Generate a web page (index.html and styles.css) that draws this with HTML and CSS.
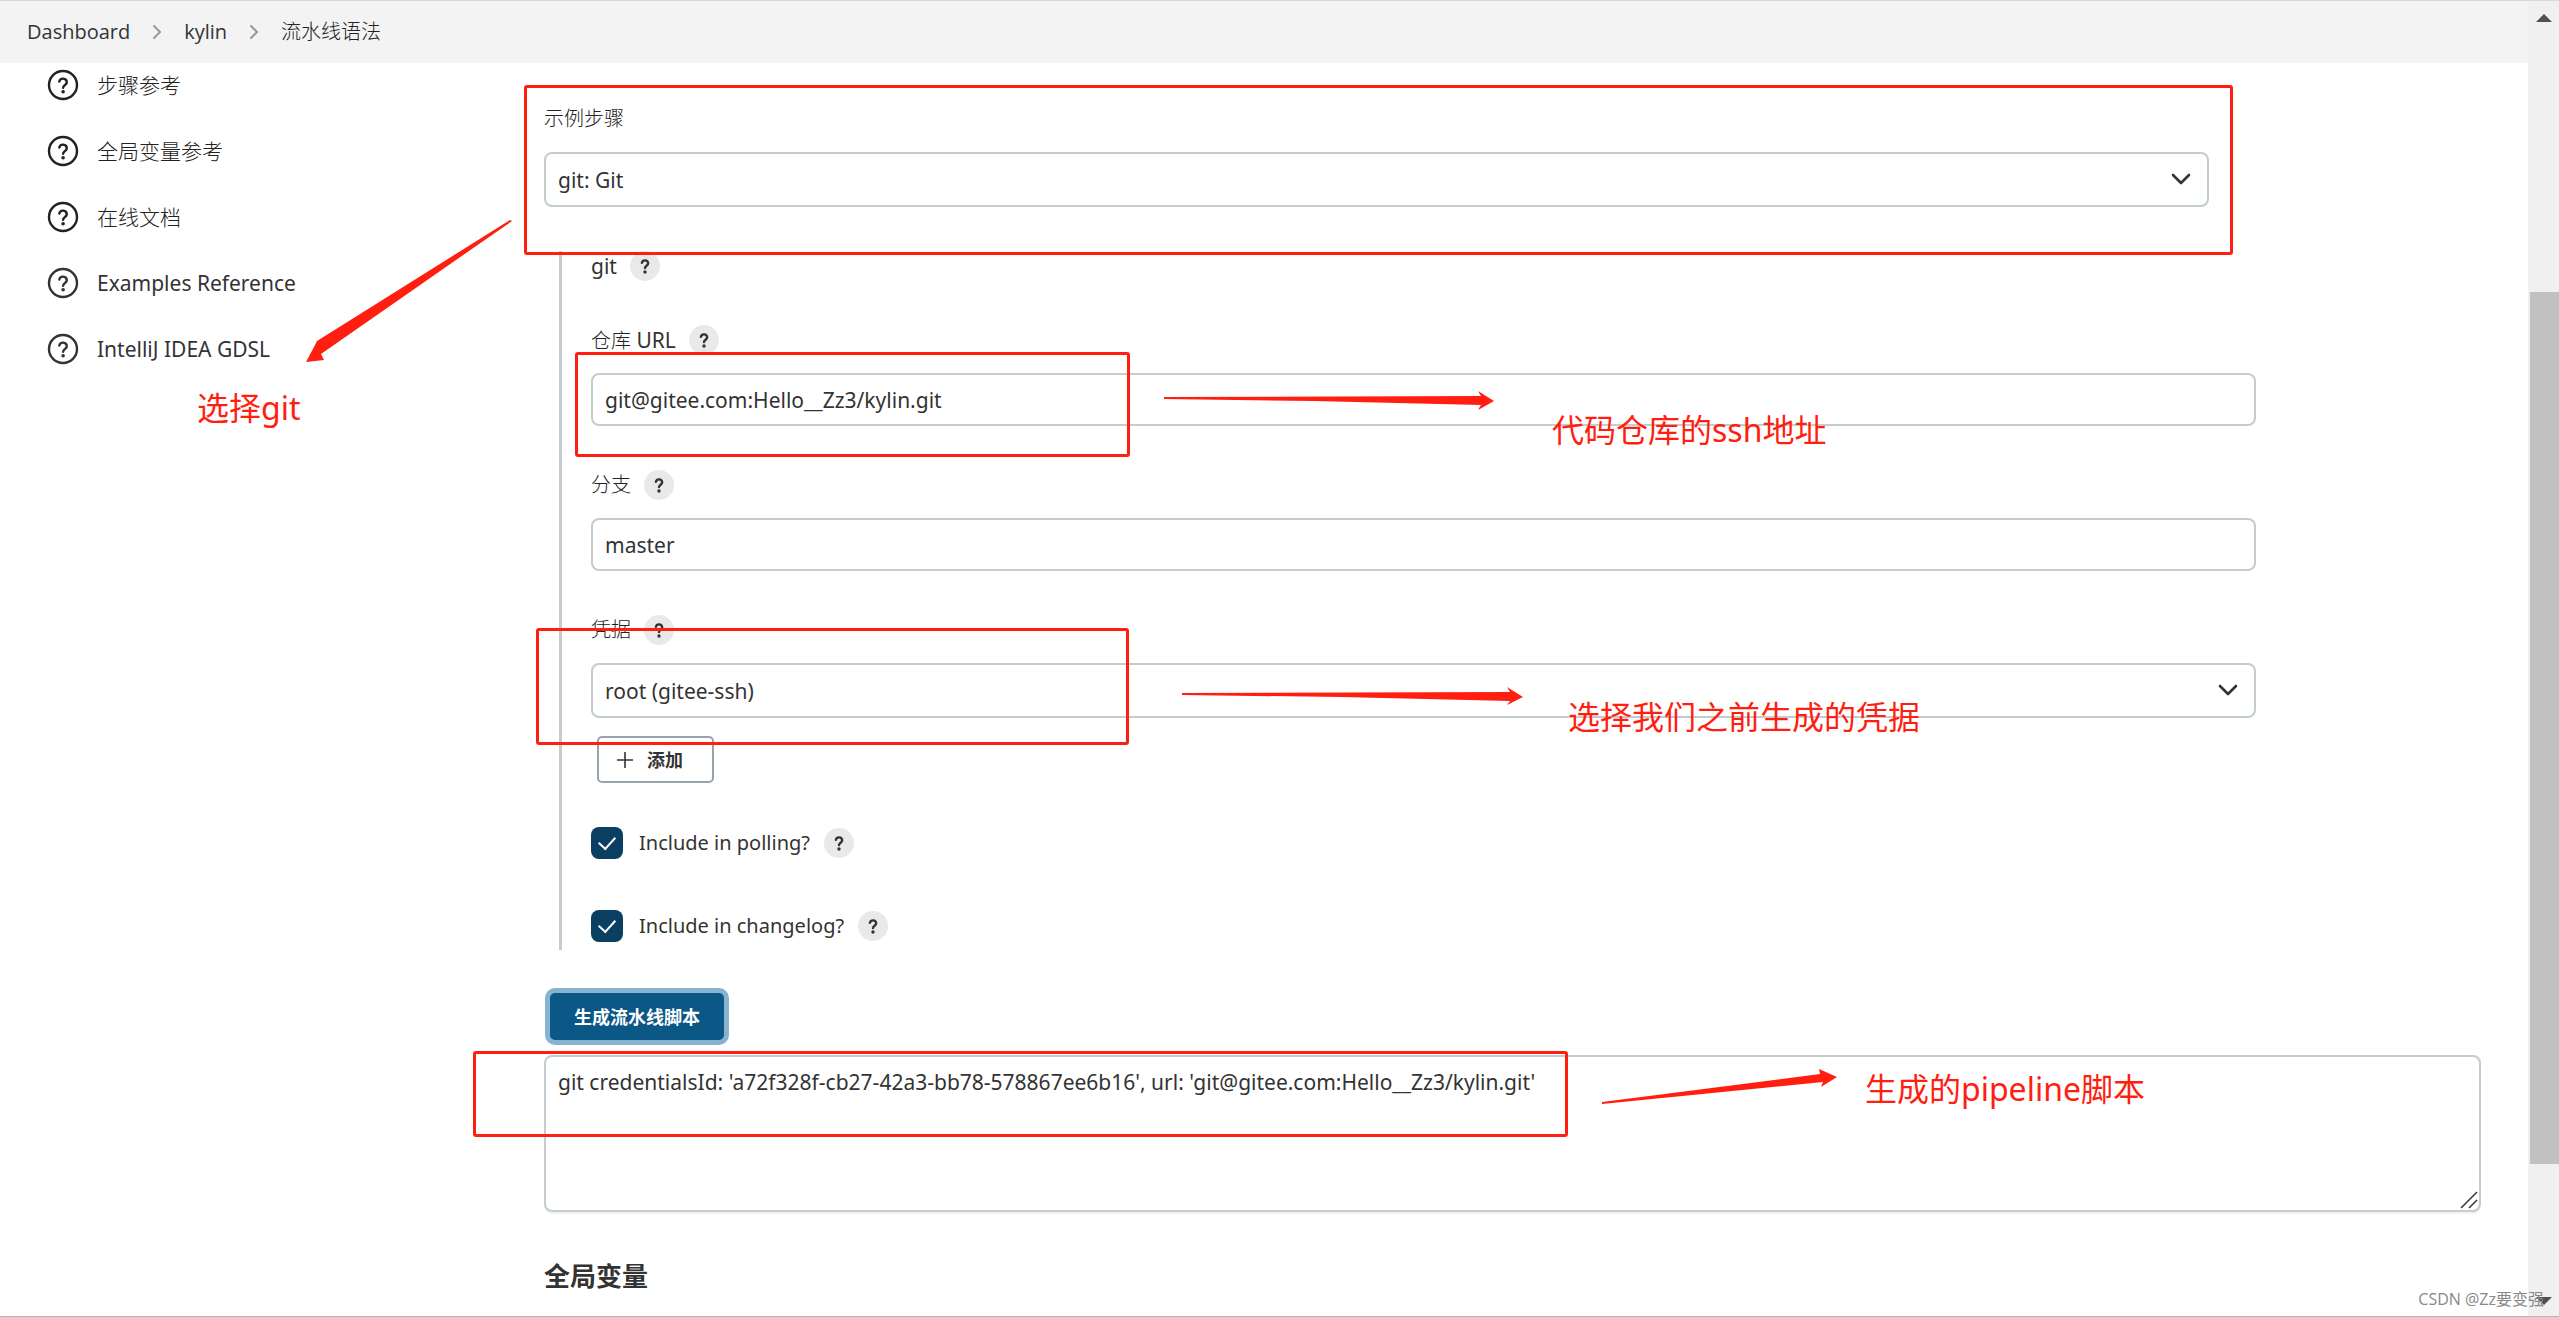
FILE: index.html
```html
<!DOCTYPE html>
<html lang="zh-CN">
<head>
<meta charset="utf-8">
<title>流水线语法</title>
<link rel="stylesheet" href="styles.css">
</head>
<body>
<svg class="defs" aria-hidden="true">
  <symbol id="help-circle" viewBox="0 0 32 32">
    <circle cx="16" cy="16" r="14" fill="none" stroke="currentColor" stroke-width="2.4"/>
    <path d="M12.3 12.6a3.8 3.8 0 0 1 7.5.6c0 2.6-3.7 3.1-3.7 5.6" fill="none" stroke="currentColor" stroke-width="2.4" stroke-linecap="round"/>
    <circle cx="16.1" cy="22.8" r="1.8" fill="currentColor"/>
  </symbol>
  <symbol id="question" viewBox="0 0 30 30">
    <path d="M11.9 11.8a3.2 3.2 0 0 1 6.3.5c0 2.3-3.2 2.6-3.2 4.8" fill="none" stroke="currentColor" stroke-width="2.4" stroke-linecap="round"/>
    <circle cx="15" cy="21" r="1.7" fill="currentColor"/>
  </symbol>
  <symbol id="chevron-down" viewBox="0 0 20 12">
    <path d="M2 2l8 8 8-8" fill="none" stroke="currentColor" stroke-width="2.6" stroke-linecap="round" stroke-linejoin="round"/>
  </symbol>
  <symbol id="chevron-right" viewBox="0 0 10 16">
    <path d="M2 2l6 6-6 6" fill="none" stroke="currentColor" stroke-width="2" stroke-linecap="round" stroke-linejoin="round"/>
  </symbol>
</svg>

<div class="page">
  <div class="view">
    <nav class="breadcrumbs" aria-label="breadcrumbs">
      <a href="#">Dashboard</a>
      <svg class="crumb-sep"><use href="#chevron-right"/></svg>
      <a href="#">kylin</a>
      <svg class="crumb-sep"><use href="#chevron-right"/></svg>
      <a class="cjk" href="#">流水线语法</a>
    </nav>

    <div class="columns">
      <aside class="side">
        <ul class="tasks">
          <li><a class="cjk" href="#"><svg class="task-icon"><use href="#help-circle"/></svg>步骤参考</a></li>
          <li><a class="cjk" href="#"><svg class="task-icon"><use href="#help-circle"/></svg>全局变量参考</a></li>
          <li><a class="cjk" href="#"><svg class="task-icon"><use href="#help-circle"/></svg>在线文档</a></li>
          <li><a href="#"><svg class="task-icon"><use href="#help-circle"/></svg>Examples Reference</a></li>
          <li><a href="#"><svg class="task-icon"><use href="#help-circle"/></svg>IntelliJ IDEA GDSL</a></li>
        </ul>
        <svg class="arrow arrow-step" viewBox="0 0 206 143"><path d="M204 0L11 121 8 127 0 142 18 140 15 134 206 1Z"/></svg>
        <p class="note note-step">选择git</p>
      </aside>

      <main class="main">
        <form>
          <div class="field">
            <div class="label-row"><label class="cjk" for="step">示例步骤</label></div>
            <div class="select">
              <select id="step"><option>git: Git</option></select>
              <svg class="caret"><use href="#chevron-down"/></svg>
            </div>
            <span class="mark mark-step"></span>
          </div>

          <section class="group">
            <div class="label-row"><span>git</span><button type="button" class="help" aria-label="git"><svg><use href="#question"/></svg></button></div>

            <div class="field">
              <div class="label-row"><label for="url"><span class="cjk">仓库</span> URL</label><button type="button" class="help" aria-label="URL"><svg><use href="#question"/></svg></button></div>
              <input class="text" id="url" type="text" value="git@gitee.com:Hello__Zz3/kylin.git">
              <span class="mark mark-url"></span>
              <svg class="arrow arrow-url" viewBox="0 0 330 20"><path d="M0 6L317 5 314 0 330 10 314 19 317 14 150 10 0 8Z"/></svg>
              <p class="note note-url">代码仓库的ssh地址</p>
            </div>

            <div class="field">
              <div class="label-row"><label class="cjk" for="branch">分支</label><button type="button" class="help" aria-label="分支"><svg><use href="#question"/></svg></button></div>
              <input class="text" id="branch" type="text" value="master">
            </div>

            <div class="field">
              <div class="label-row"><label class="cjk" for="cred">凭据</label><button type="button" class="help" aria-label="凭据"><svg><use href="#question"/></svg></button></div>
              <div class="select">
                <select id="cred"><option>root (gitee-ssh)</option></select>
                <svg class="caret"><use href="#chevron-down"/></svg>
              </div>
              <button type="button" class="add"><svg viewBox="0 0 16 16"><path d="M8 0v16M0 8h16" stroke="currentColor" stroke-width="1.6"/></svg>添加</button>
              <span class="mark mark-cred"></span>
              <svg class="arrow arrow-cred" viewBox="0 0 341 20"><path d="M0 6L328 5 325 0 341 10 325 18 328 14 160 10 0 8Z"/></svg>
              <p class="note note-cred">选择我们之前生成的凭据</p>
            </div>

            <div class="checks">
              <div class="check-row"><input type="checkbox" id="poll" checked><label for="poll">Include in polling?</label><button type="button" class="help" aria-label="polling"><svg><use href="#question"/></svg></button></div>
              <div class="check-row"><input type="checkbox" id="log" checked><label for="log">Include in changelog?</label><button type="button" class="help" aria-label="changelog"><svg><use href="#question"/></svg></button></div>
            </div>
          </section>

          <button type="button" class="generate">生成流水线脚本</button>
          <div class="output">
            <textarea aria-label="生成流水线脚本">git credentialsId: 'a72f328f-cb27-42a3-bb78-578867ee6b16', url: 'git@gitee.com:Hello__Zz3/kylin.git'</textarea>
            <svg class="grip" viewBox="0 0 18 18"><path d="M1 17L17 1M9 17l8-8" stroke="currentColor" stroke-width="1.5"/></svg>
            <span class="mark mark-output"></span>
            <svg class="arrow arrow-output" viewBox="0 0 235 36"><path d="M0 33L218 5 217 0 235 8 219 18 221 13 0 35Z"/></svg>
            <p class="note note-output">生成的pipeline脚本</p>
          </div>
        </form>
        <h2>全局变量</h2>
      </main>
    </div>
  </div>

  <div class="scrollbar" aria-hidden="true">
    <svg viewBox="0 0 16 8"><path d="M8 0l8 8H0z"/></svg>
    <div class="track"><div class="thumb"></div></div>
    <svg viewBox="0 0 16 8"><path d="M0 0h16L8 8z"/></svg>
  </div>
  <span class="watermark">CSDN @Zz要变强</span>
</div>
</body>
</html>
```
FILE: styles.css
```css
* { box-sizing: border-box; }

:root {
  --text: #333;
  --line: #c3ccd1;
  --red: #ff1e10;
}

body {
  margin: 0;
  background: #fff;
  color: var(--text);
  font: 21px/30px "Noto Sans", "Noto Sans CJK SC", sans-serif;
}

button, input, select, textarea { font: inherit; color: inherit; }
a { color: inherit; text-decoration: none; }
.cjk { font-weight: 300; color: #222; }
.defs { position: absolute; width: 0; height: 0; }

.page {
  position: relative;
  display: flex;
  min-height: 100vh;
  border-top: 1px solid #d8d8d8;
  border-bottom: 1px solid #b0b6b8;
}
.view { flex: 1; min-width: 0; }

.breadcrumbs {
  display: flex;
  align-items: center;
  height: 62px;
  padding-left: 27px;
  background: #f3f3f3;
  font-family: "Open Sans", "Noto Sans CJK SC", sans-serif;
  font-size: 20px;
}
.crumb-sep { width: 10px; height: 16px; margin: 0 22px; color: #999; }

.columns { display: grid; grid-template-columns: 544px minmax(0, 1fr); }
.side { position: relative; padding: 6px 0 0 47px; }
.tasks {
  display: flex;
  flex-direction: column;
  gap: 34px;
  margin: 0;
  padding: 0;
  list-style: none;
}
.tasks a { display: flex; align-items: center; gap: 18px; height: 32px; }
.task-icon { flex: none; width: 32px; height: 32px; }

.main { padding: 41px 47px 22px 0; }
.field { position: relative; max-width: 1665px; }
.label-row { display: flex; align-items: center; gap: 13px; height: 30px; }
.label-row .cjk { font-size: 20px; }
.field .label-row { margin-bottom: 18px; }

.help {
  width: 30px;
  height: 30px;
  padding: 0;
  border: 0;
  border-radius: 50%;
  background: #e9e9e9;
}
.help svg { display: block; width: 30px; height: 30px; }

.text, select, textarea {
  display: block;
  width: 100%;
  border: 2px solid var(--line);
  border-radius: 8px;
  background: #fff;
  padding: 0 12px;
}
.text { height: 53px; }
select { height: 55px; appearance: none; }
.select { position: relative; }
.caret {
  position: absolute;
  top: 21px;
  right: 18px;
  width: 20px;
  height: 12px;
  pointer-events: none;
}

.group {
  display: flex;
  flex-direction: column;
  gap: 44px;
  margin: 44px 0 43px 15px;
  padding: 0 0 8px 29px;
  border-left: 3px solid var(--line);
}
.group .field { width: calc(100% + 47px); }

.add {
  display: flex;
  align-items: center;
  gap: 14px;
  height: 47px;
  margin: 18px 0 0 6px;
  padding: 0 29px 0 18px;
  border: 2px solid #98a4ac;
  border-radius: 5px;
  background: #fff;
  font-size: 18px;
  font-weight: 700;
}
.add svg { width: 16px; height: 16px; }

.checks { display: flex; flex-direction: column; gap: 51px; }
.check-row { display: flex; align-items: center; height: 32px; font-size: 20px; }
.check-row input {
  appearance: none;
  width: 32px;
  height: 32px;
  margin: 0 16px 0 0;
  border-radius: 8px;
  background: #0b3f62;
  display: grid;
  place-items: center;
}
.check-row input::after {
  content: "";
  width: 8px;
  height: 14px;
  margin-bottom: 4px;
  border: solid #fff;
  border-width: 0 2px 2px 0;
  transform: rotate(42deg);
}
.check-row .help { margin-left: 14px; }

.generate {
  display: block;
  height: 47px;
  margin: 0 0 15px 6px;
  padding: 0 24px;
  border: 0;
  border-radius: 5px;
  background: #0b5786;
  box-shadow: 0 0 0 5px #85b3d0;
  color: #fff;
  font-size: 18px;
  font-weight: 700;
}

.output { position: relative; }
textarea {
  height: 157px;
  padding: 10px 12px;
  resize: none;
  box-shadow: 0 2px 0 #f3f3f3;
}
.grip { position: absolute; right: 3px; bottom: 3px; width: 18px; height: 18px; }

h2 { margin: 46px 0 0; font-size: 26px; line-height: 36px; }

.scrollbar {
  display: flex;
  flex-direction: column;
  align-items: center;
  width: 31px;
  padding: 13px 0 11px;
  background: #f0f0f0;
}
.scrollbar svg { width: 16px; height: 8px; fill: #505050; }
.track { flex: 1; width: 100%; padding: 270px 0 0 2px; }
.thumb { height: 872px; background: #c1c1c1; }

.watermark {
  position: absolute;
  right: 15px;
  bottom: 2px;
  color: #888;
  font-family: "Open Sans", "Noto Sans CJK SC", sans-serif;
  font-size: 16px;
}

/* Red annotations laid over the form */
.mark { position: absolute; border: 3px solid var(--red); border-radius: 3px; pointer-events: none; }
.mark-step { inset: -19px -24px -48px -20px; }
.mark-url { left: -16px; top: 27px; width: 555px; height: 105px; }
.mark-cred { left: -55px; top: 13px; width: 593px; height: 117px; }
.mark-output { left: -71px; top: -4px; width: 1095px; height: 86px; }

.note {
  position: absolute;
  margin: 0;
  color: var(--red);
  font-size: 32px;
  line-height: 40px;
  white-space: nowrap;
}
.note-step { left: 197px; top: 325px; }
.note-url { left: 961px; top: 85px; }
.note-cred { left: 977px; top: 82px; }
.note-output { left: 1321px; top: 14px; }

.arrow { position: absolute; fill: var(--red); pointer-events: none; }
.arrow-step { left: 306px; top: 157px; width: 206px; height: 143px; }
.arrow-url { left: 573px; top: 66px; width: 330px; height: 20px; }
.arrow-cred { left: 591px; top: 72px; width: 341px; height: 20px; }
.arrow-output { left: 1058px; top: 14px; width: 235px; height: 36px; }
```
